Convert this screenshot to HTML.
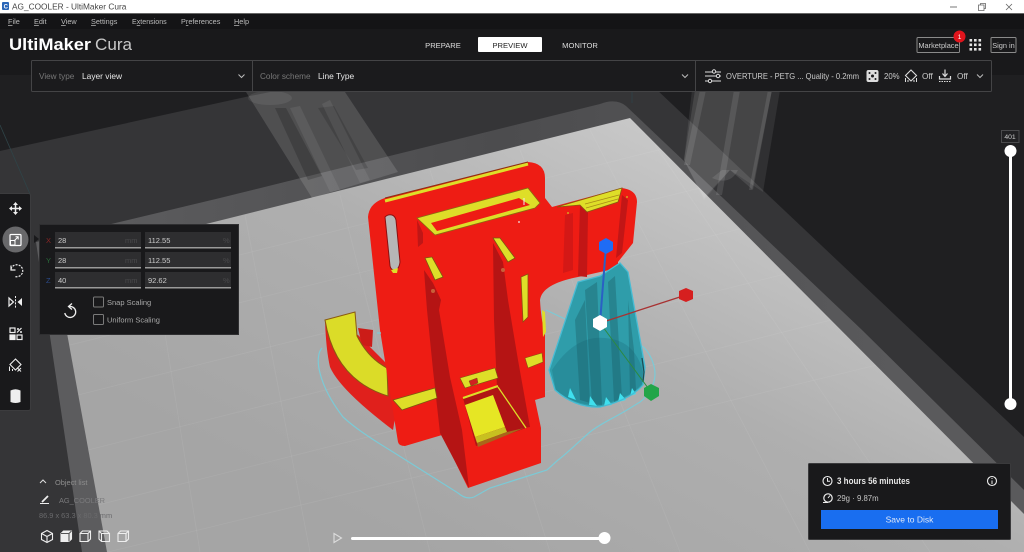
<!DOCTYPE html>
<html lang="en"><head><meta charset="utf-8"><title>AG_COOLER - UltiMaker Cura</title>
<style>
html,body{margin:0;padding:0;background:#1f1f21;width:1024px;height:552px;overflow:hidden}
svg{display:block;position:absolute;left:0;top:0}
text{font-family:"Liberation Sans",sans-serif;font-size:8px;fill:#ddd}
</style></head><body>
<svg width="1024" height="552" viewBox="0 0 1024 552" xmlns="http://www.w3.org/2000/svg">
<defs>
<linearGradient id="plate" gradientUnits="userSpaceOnUse" x1="640" y1="120" x2="420" y2="552">
<stop offset="0" stop-color="#c8c8c8"/><stop offset=".45" stop-color="#afafaf"/><stop offset="1" stop-color="#a5a5a5"/></linearGradient>
<linearGradient id="mid" gradientUnits="userSpaceOnUse" x1="100" y1="300" x2="900" y2="300">
<stop offset="0" stop-color="#5c5c5e"/><stop offset=".5" stop-color="#4c4c4e"/><stop offset="1" stop-color="#5a5a5c"/></linearGradient>
<clipPath id="pc"><path d="M54 262 L630 118 L1024 514 V552 H107Z"/></clipPath>
</defs>
<rect width="1024" height="552" fill="#1f1f21"/>
<!-- outer band -->
<path d="M0 151 L250 96 L290 88 H655 L1024 437 V552 H0Z" fill="#353537"/>
<!-- mid band -->
<path d="M36 242 L220 198 L600 104 Q616 98 626 106 L862 330 L1024 490 V552 H82Z" fill="url(#mid)"/>
<!-- plate -->
<path d="M54 262 L630 118 L1024 514 V552 H107Z" fill="url(#plate)"/>
<g clip-path="url(#pc)" stroke="#fff" stroke-opacity=".07" stroke-width=".8">
<path d="M60 300L690 142M70 345L740 178M78 395L795 215M88 450L860 255M98 505L930 295M108 552L1000 335"/>
<path d="M150 240L200 552M245 215L310 552M340 195L430 552M430 170L550 552M520 150L680 552M590 130L810 552M655 145L930 552"/>
</g>
<path d="M0 125L30 194" stroke="#2f4448" stroke-width=".8" fill="none"/>
<path d="M632 90V103" stroke="#2f4448" stroke-width=".8"/>
<!-- left rods -->
<g>
<path d="M246 92H345L398 172L312 198Z" fill="#fff" fill-opacity=".13"/>
<path d="M275 108H286L322 176L308 180Z" fill="#000" fill-opacity=".18"/>
<path d="M318 108L334 106L368 168L356 170Z" fill="#000" fill-opacity=".14"/>
<path d="M290 108L300 106L340 190L330 192Z" fill="#fff" fill-opacity=".07"/>
<path d="M322 104L330 100L370 180L360 183Z" fill="#fff" fill-opacity=".07"/>
<ellipse cx="270" cy="98" rx="22" ry="7" fill="#fff" fill-opacity=".07"/>
</g>
<!-- right rods -->
<g>
<path d="M692 90H780L763 192L730 170L704 200L684 160Z" fill="#fff" fill-opacity=".08"/>
<path d="M695 90H772L753 190L730 170L704 198L684 160Z" fill="#fff" fill-opacity=".1"/>
<path d="M700 90H706L690 165H684Z M734 90H740L722 195H716Z M768 90H772L752 190H749Z" fill="#fff" fill-opacity=".1"/>
<path d="M712 178Q730 186 738 170L722 170Z" fill="#fff" fill-opacity=".1"/>
</g>

<!-- arc piece -->
<path d="M325 320Q326 350 330 367Q340 390 393 430L398 400L388 365L358 335Z" fill="#e0201c"/>
<path d="M358 328L373 330L372 347L362 345Z" fill="#cc1c18"/>
<path d="M325 320L355 312L357 336Q368 358 387 368L388 396Q335 380 325 320Z" fill="#dbdc28" stroke="#8a5a10" stroke-width="1"/>

<!-- main body -->
<path d="M385 198L528 162Q545 163 545 178V198L552 207L622 188Q637 190 637 202L633 243L618 262V268L578 277Q542 284 540 300Q541 320 545 333V397L535 400L541 428V463L468 488L442 435L405 446Q399 446 398 442L380 330L368 217Q369 203 385 198Z" fill="#ee1c14"/>
<!-- shading -->
<path d="M424 270L433 283L441 300L439 310L450 377L462 430L469 488L440 433L433 370L427 310Z" fill="#b51414"/>
<path d="M493 243L503 262L508 300L518 360L530 427L525 428L497 388L494 320Z" fill="#b51414"/>
<path d="M580 205L588 212L587 277L578 276Z" fill="#c21616"/>
<path d="M622 195L628 200L622 253L616 258Z" fill="#c21616"/>
<path d="M565 215L573 213L573 270L563 273Z" fill="#d41816"/>
<path d="M417 220L423 233V243L418 247Z" fill="#c01616"/>
<!-- edge trim -->
<path d="M385 201L528 164" stroke="#dede28" stroke-width="3"/>
<path d="M385 198L528 162" stroke="#8a3010" stroke-width="1"/>
<!-- slots -->
<path d="M385 217Q388 214 392 215Q395 216 396 220L400 262Q399 270 394 270Q391 270 390 266Z" fill="#b6b6b6" stroke="#8c1010" stroke-width="1"/>
<path d="M391 270L398 268L397 273L393 273Z" fill="#dede28"/>
<!-- yellow frame -->
<path d="M417 218L528 188L540 203L535 208L435 235Z" fill="#dede28" stroke="#8a6a10" stroke-width=".8"/>
<path d="M431 223L519 198L530 205L437 231Z" fill="#ee1c14"/>
<path d="M524 198V205" stroke="#eee" stroke-width="1"/>
<!-- column tops -->
<path d="M425 258L432 257L443 277L435 280Z" fill="#dede28" stroke="#7a5a10" stroke-width=".8"/>
<path d="M493 238L500 238L515 258L508 262Z" fill="#dede28" stroke="#7a5a10" stroke-width=".8"/>
<path d="M521 277L528 274L528 317L523 322Z" fill="#dede28" stroke="#8c5010" stroke-width=".8"/>
<path d="M557 207L622 188L618 202L587 212L580 205Z" fill="#dede28" stroke="#8a5a10" stroke-width=".8"/>
<path d="M585 204L619 195M586 208L618 199" stroke="#a88a18" stroke-width=".7"/>
<path d="M542 310L545 312L546 332L543 337Z" fill="#dede28"/>
<path d="M525 358L542 353L543 362L528 368Z" fill="#dede28" stroke="#8c5010" stroke-width=".6"/>
<circle cx="433" cy="291" r="2" fill="#c8603a"/><circle cx="503" cy="270" r="2" fill="#c8603a"/><circle cx="519" cy="222" r=".9" fill="#eee"/>
<circle cx="568" cy="213" r="1" fill="#d8a020"/><circle cx="627" cy="197" r="1" fill="#d8a020"/>
<!-- left ledge -->
<path d="M393 400L435 388L437 398L402 410Z" fill="#dede28" stroke="#7a5a10" stroke-width=".8"/>
<!-- front recess -->
<path d="M460 378L495 368L498 378L465 388Z" fill="#dede28" stroke="#7a5a10" stroke-width=".6"/>
<path d="M469 381L477 378L478 383L471 386Z" fill="#d02020" stroke="#7a5a10" stroke-width=".5"/>
<path d="M463 398L498 386L526 428L476 446Z" fill="#b01414"/>
<path d="M463 398L498 386" stroke="#dede28" stroke-width="2"/>
<path d="M498 387L526 428" stroke="#dede28" stroke-width="1.300"/>
<path d="M465 405L493 395L505 427L475 437Z" fill="#e6e624"/>
<path d="M475 437L505 427L507 432L477 443Z" fill="#c8c020"/>
<path d="M477 443L507 432L524 428L478 447Z" fill="#a8661a"/>

<!-- skirt -->
<path d="M546 310L565 319M377 333H381M642 346C650 352 655 365 655 374C655 385 648 396 640 402L627 410C610 420 600 424 590 432C575 445 565 455 558 460L547 470L490 488L474 497Q466 500 458 493L393 452C370 438 355 428 343 417C330 400 323 385 320 373C317 362 318 352 322 348" fill="none" stroke="#7ccad6" stroke-width="1.200"/>
<!-- cone -->
<path d="M578 282L600 276L620 263L628 272L645 367L643 385Q630 400 600 407Q575 408 555 390L549 370Z" fill="#2f9daa"/>
<path d="M585 290L597 282L602 405L592 404Z M608 282L615 276L622 398L614 402Z M575 320L585 300L590 403L580 400Z M628 300L634 350L636 390L630 395Z" fill="#27848f"/>
<path d="M552 370Q575 335 605 338Q635 340 643 372L642 384Q630 398 600 405Q575 406 556 390Z" fill="#14586a" fill-opacity=".22"/>
<path d="M570 388L576 400L568 397Z M590 396L597 406L589 405Z M606 397L612 405L604 406Z M620 393L626 400L618 402Z M632 388L636 394L630 396Z" fill="#3fe0ee"/>
<path d="M578 282L600 276L620 263L628 272L645 367L643 385Q630 400 600 407Q575 408 555 390L549 370Z" fill="none" stroke="#48bcd4" stroke-width="1.300"/>
<path d="M642 358L644 372L643 382" stroke="#1d4a52" stroke-width="1.200" fill="none"/>
<!-- gizmo -->
<path d="M600 323L686 295" stroke="#a83232" stroke-width="1.300"/>
<path d="M600 323L606 246" stroke="#2a60c4" stroke-width="2"/>
<path d="M600 323L651 392" stroke="#2c8a40" stroke-width="1"/>
<path d="M686 288L693 291L693 299L686 302L679 299L679 291Z" fill="#d61f1f"/>
<path d="M606 238L613 242L613 250L606 254L599 250L599 242Z" fill="#1f6cf5"/>
<path d="M651 384L659 388L659 396L651 401L644 396L644 388Z" fill="#22a548"/>
<path d="M600 315L607 319L607 327L600 331L593 327L593 319Z" fill="#fff"/>

<!-- title bar -->
<rect width="1024" height="13" fill="#fff"/><rect y="13" width="1024" height="1" fill="#666"/>
<rect x="2" y="2" width="7" height="8" rx="1" fill="#2a66b8"/><text x="3.600" y="8.600" style="font-size:6px;font-weight:bold;fill:#fff">C</text>
<text x="12" y="9.500" style="font-size:8.300px;fill:#444">AG_COOLER - UltiMaker Cura</text>
<path d="M950 7H957" stroke="#777" stroke-width="1"/>
<path d="M978.500 5H984V10.500H978.500Z M980.500 5V3.500H985.500V8.500H984" stroke="#666" fill="none" stroke-width=".8"/>
<path d="M1006 4L1012 10M1012 4L1006 10" stroke="#666" stroke-width=".8"/>
<!-- menu + header -->
<rect y="14" width="1024" height="15" fill="#141416"/>
<rect y="29" width="1024" height="46" fill="#19191b"/>
<text x="8" y="24" style="font-size:7.300px;fill:#bbb"><tspan text-decoration="underline">F</tspan>ile</text>
<text x="34" y="24" style="font-size:7.300px;fill:#bbb"><tspan text-decoration="underline">E</tspan>dit</text>
<text x="61" y="24" style="font-size:7.300px;fill:#bbb"><tspan text-decoration="underline">V</tspan>iew</text>
<text x="91" y="24" style="font-size:7.300px;fill:#bbb"><tspan text-decoration="underline">S</tspan>ettings</text>
<text x="132" y="24" style="font-size:7.100px;fill:#bbb">E<tspan text-decoration="underline">x</tspan>tensions</text>
<text x="181" y="24" style="font-size:7.300px;fill:#bbb">P<tspan text-decoration="underline">r</tspan>eferences</text>
<text x="234" y="24" style="font-size:7.300px;fill:#bbb"><tspan text-decoration="underline">H</tspan>elp</text>
<text x="9" y="50" style="font-size:16.500px;font-weight:bold;fill:#fff" textLength="82" lengthAdjust="spacingAndGlyphs">UltiMaker</text>
<text x="95" y="50" style="font-size:16.500px;fill:#c8c8c8" textLength="37" lengthAdjust="spacingAndGlyphs">Cura</text>
<text x="443" y="48" text-anchor="middle" style="font-size:7.600px;fill:#ddd">PREPARE</text>
<rect x="478" y="37" width="64" height="15" rx="1" fill="#fff"/>
<text x="510" y="48" text-anchor="middle" style="font-size:7.600px;fill:#222">PREVIEW</text>
<text x="580" y="48" text-anchor="middle" style="font-size:7.600px;fill:#ddd">MONITOR</text>
<rect x="917" y="37.500" width="42.500" height="15" rx="1" fill="none" stroke="#8a8a8a"/>
<text x="938.500" y="48" text-anchor="middle" style="font-size:7.400px;fill:#ccc">Marketplace</text>
<circle cx="959.500" cy="36.500" r="6" fill="#e0141c"/><text x="959.500" y="39" text-anchor="middle" style="font-size:6.500px;fill:#fff">1</text>
<g fill="#e6e6e6"><rect x="969.500" y="39" width="2.600" height="2.600"/><rect x="974" y="39" width="2.600" height="2.600"/><rect x="978.500" y="39" width="2.600" height="2.600"/><rect x="969.500" y="43.500" width="2.600" height="2.600"/><rect x="974" y="43.500" width="2.600" height="2.600"/><rect x="978.500" y="43.500" width="2.600" height="2.600"/><rect x="969.500" y="48" width="2.600" height="2.600"/><rect x="974" y="48" width="2.600" height="2.600"/><rect x="978.500" y="48" width="2.600" height="2.600"/></g>
<rect x="991" y="37.500" width="25" height="15" rx="1" fill="none" stroke="#8a8a8a"/>
<text x="1003.500" y="48" text-anchor="middle" style="font-size:7.400px;fill:#ccc">Sign in</text>
<!-- view bar -->
<rect x="31.500" y="60.500" width="960" height="31" rx="1" fill="#1b1b1d" stroke="#444446"/>
<path d="M252.500 61V91M695.500 61V91" stroke="#444446"/>
<text x="39" y="79" style="font-size:8.200px;fill:#777">View type</text>
<text x="82" y="79" style="font-size:8.400px;fill:#e8e8e8">Layer view</text>
<path d="M238.500 74.500L241.500 77.500L244.500 74.500" fill="none" stroke="#bbb" stroke-width="1"/>
<text x="260" y="79" style="font-size:8.200px;fill:#777">Color scheme</text>
<text x="318" y="79" style="font-size:8.400px;fill:#e8e8e8">Line Type</text>
<path d="M682 74.500L685 77.500L688 74.500" fill="none" stroke="#bbb" stroke-width="1"/>
<path d="M705 72H721M705 76H721M705 81H721" stroke="#ddd" stroke-width="1"/>
<g fill="#19191b" stroke="#ddd"><circle cx="714" cy="71.500" r="1.700"/><circle cx="718" cy="76" r="1.700"/><circle cx="710" cy="81" r="1.700"/></g>
<text x="726" y="79" style="font-size:8.400px;fill:#ccc" textLength="133" lengthAdjust="spacingAndGlyphs">OVERTURE - PETG ... Quality - 0.2mm</text>
<rect x="866.500" y="70" width="12" height="12" rx="2" fill="#ddd"/>
<g fill="#1b1b1d"><circle cx="872.500" cy="76" r="1.500"/><circle cx="869.500" cy="73" r="1"/><circle cx="875.500" cy="73" r="1"/><circle cx="869.500" cy="79" r="1"/><circle cx="875.500" cy="79" r="1"/></g>
<text x="884" y="79" style="font-size:7.800px;fill:#ccc">20%</text>
<path d="M911 70L916.500 75.500L911 81L905.500 75.500Z" fill="none" stroke="#ddd" stroke-width="1.100"/>
<path d="M905.500 82V78M916.500 82V78M908 82V80M914 82V80" stroke="#ddd" stroke-width="1"/>
<text x="922" y="79" style="font-size:8.200px;fill:#ccc">Off</text>
<path d="M945 69.500V76M942.500 73.500L945 76.500L947.500 73.500M939.500 76V79H950.500V76" fill="none" stroke="#ddd" stroke-width="1.200"/>
<path d="M939 81.500H951" stroke="#ddd" stroke-dasharray="1.500 1"/>
<text x="957" y="79" style="font-size:8.200px;fill:#ccc">Off</text>
<path d="M977 74.500L980 77.500L983 74.500" fill="none" stroke="#bbb" stroke-width="1"/>

<!-- layer slider -->
<rect x="1001.500" y="130.500" width="17.500" height="12" fill="#212123" stroke="#4a4a4c"/>
<text x="1010" y="139" text-anchor="middle" style="font-size:6.800px;fill:#ccc">401</text>
<rect x="1009" y="151" width="3" height="253" fill="#fff"/>
<circle cx="1010.500" cy="151" r="6" fill="#fff"/><circle cx="1010.500" cy="404" r="6" fill="#fff"/>

<!-- left toolbar -->
<rect x="-2" y="193.500" width="32.500" height="217" rx="2" fill="#19191b" stroke="#3c3c3e"/>
<circle cx="15.500" cy="239.500" r="13" fill="#68686a"/>
<!-- move -->
<path d="M15.500 203V214M10 208.500H21" stroke="#eee" stroke-width="1.500"/>
<path d="M15.500 202L13 205H18ZM15.500 215L13 212H18ZM9 208.500L12 206V211ZM22 208.500L19 206V211Z" fill="#eee"/>
<!-- scale -->
<rect x="10" y="234.500" width="11" height="11" rx="1" fill="none" stroke="#fff" stroke-width="1.200"/>
<rect x="10.500" y="240.500" width="4.500" height="4.500" fill="#68686a" stroke="#fff"/>
<path d="M14 241L18 237M15.500 236.800H18.200V239.500" fill="none" stroke="#fff" stroke-width="1"/>
<!-- rotate -->
<path d="M11 265.500V270H15.500" fill="none" stroke="#eee" stroke-width="1.200"/>
<path d="M11 269A6 6 0 1 1 15 276.500" fill="none" stroke="#eee" stroke-width="1.200" stroke-dasharray="2 1.200"/>
<!-- mirror -->
<path d="M15.500 296V308" stroke="#eee" stroke-dasharray="2 1.200"/>
<path d="M9 298V306L13.500 302Z" fill="none" stroke="#eee" stroke-width="1.200"/>
<path d="M22 298V306L17.500 302Z" fill="#eee"/>
<!-- per-model -->
<g fill="none" stroke="#eee" stroke-width="1.200"><rect x="10" y="328" width="5" height="4.500"/><rect x="10" y="335" width="5" height="4.500" fill="#eee"/><rect x="17" y="335" width="5" height="4.500"/></g>
<path d="M17 332.500L21.500 328" stroke="#eee" stroke-width="1.200"/>
<circle cx="18" cy="329" r="1" fill="#eee"/><circle cx="21" cy="332" r="1" fill="#eee"/>
<!-- support -->
<path d="M15.500 359L21 364.500L15.500 370L10 364.500Z" fill="none" stroke="#eee" stroke-width="1.100"/>
<path d="M9.500 371V366.500M12.500 371V369" stroke="#eee"/>
<path d="M17.500 368L21 371.500M21 368L17.500 371.500" stroke="#eee"/>
<!-- cylinder -->
<path d="M10.500 390.500Q15.500 388 20.500 390.500V402Q15.500 404 10.500 402Z" fill="#eee"/>

<!-- scale panel -->
<path d="M39 239L34 235V243Z" fill="#19191b"/>
<rect x="39.500" y="224.500" width="199" height="110" fill="#19191b" stroke="#2f2f31"/>
<g fill="#2e2e30"><rect x="55" y="232" width="86" height="15"/><rect x="145" y="232" width="86" height="15"/><rect x="55" y="252" width="86" height="15"/><rect x="145" y="252" width="86" height="15"/><rect x="55" y="272" width="86" height="15"/><rect x="145" y="272" width="86" height="15"/></g>
<g fill="#9a9a9a"><rect x="55" y="247" width="86" height="1.500"/><rect x="145" y="247" width="86" height="1.500"/><rect x="55" y="267" width="86" height="1.500"/><rect x="145" y="267" width="86" height="1.500"/><rect x="55" y="287" width="86" height="1.500"/><rect x="145" y="287" width="86" height="1.500"/></g>
<text x="46" y="243" style="font-size:7.500px;fill:#8a2626">X</text>
<text x="46" y="263" style="font-size:7.500px;fill:#2a6a3a">Y</text>
<text x="46" y="283" style="font-size:7.500px;fill:#2a4a8a">Z</text>
<text x="58" y="243" style="font-size:7.500px;fill:#ccc">28</text>
<text x="58" y="263" style="font-size:7.500px;fill:#ccc">28</text>
<text x="58" y="283" style="font-size:7.500px;fill:#ccc">40</text>
<text x="148" y="243" style="font-size:7.500px;fill:#ccc">112.55</text>
<text x="148" y="263" style="font-size:7.500px;fill:#ccc">112.55</text>
<text x="148" y="283" style="font-size:7.500px;fill:#ccc">92.62</text>
<text x="125" y="243" style="font-size:7.500px;fill:#4a4a4c">mm</text><text x="125" y="263" style="font-size:7.500px;fill:#4a4a4c">mm</text><text x="125" y="283" style="font-size:7.500px;fill:#4a4a4c">mm</text><text x="223" y="243" style="font-size:7.500px;fill:#4a4a4c">%</text><text x="223" y="263" style="font-size:7.500px;fill:#4a4a4c">%</text><text x="223" y="283" style="font-size:7.500px;fill:#4a4a4c">%</text>
<rect x="93.500" y="297" width="10" height="10" rx="1" fill="none" stroke="#7a7a7a"/>
<rect x="93.500" y="314.500" width="10" height="10" rx="1" fill="none" stroke="#7a7a7a"/>
<text x="107" y="305" style="font-size:7.500px;fill:#a8a8a8">Snap Scaling</text>
<text x="107" y="322.500" style="font-size:7.500px;fill:#a8a8a8">Uniform Scaling</text>
<path d="M69.500 306.500A5.500 5.500 0 1 1 64.800 313" fill="none" stroke="#eee" stroke-width="1.300"/>
<path d="M72 303.500L68.500 306.500L72 309.500" fill="none" stroke="#eee" stroke-width="1.300"/>

<!-- object list -->
<path d="M40 483L43 480L46 483" fill="none" stroke="#ddd" stroke-width="1"/>
<text x="55" y="485" style="font-size:7.400px;fill:#8e8e8e">Object list</text>
<path d="M42 502L48 496" stroke="#eee" stroke-width="1.800"/><path d="M40 503.500H49" stroke="#eee"/>
<text x="59" y="503" style="font-size:7.400px;fill:#7a7a7c">AG_COOLER</text>
<text x="39" y="518" style="font-size:7.400px;fill:#6a6a6c">86.9 x 63.3 x 80.3 mm</text>
<g fill="none" stroke="#eee" stroke-width="1.100">
<path d="M47 530.500L52.500 533.500V539.500L47 542.500L41.500 539.500V533.500ZM41.500 533.500L47 536.500L52.500 533.500M47 536.500V542.500"/>
<path d="M61 533.500L63.500 531H71.500V539L69 541.500H61Z" fill="#eee"/>
<path d="M61 533.500H69V541.500M69 533.500L71.500 531" stroke="#555"/>
<path d="M80 533.500L82.500 531H90.500V539L88 541.500H80ZM80 533.500H88V541.500M88 533.500L90.500 531"/>
<path d="M99 531H107L109.500 533.500V541.500H101.500L99 539ZM101.500 533.500H109.500M101.500 533.500V541.500M99 531L101.500 533.500"/>
<path d="M118 533.500L120.500 531H128.500V539L126 541.500H118ZM118 533.500H126V541.500M126 533.500L128.500 531"/>
</g>

<!-- play -->
<path d="M334 533.500L341.500 538L334 542.500Z" fill="none" stroke="#ddd" stroke-width="1.100"/>
<rect x="351" y="537" width="253" height="3" rx="1.500" fill="#fff"/>
<circle cx="604.500" cy="538" r="6" fill="#fff"/>

<!-- time panel -->
<rect x="808.500" y="463.500" width="202" height="76" rx="1" fill="#19191b" stroke="#3a3a3c"/>
<circle cx="827.500" cy="481" r="4.500" fill="none" stroke="#eee" stroke-width="1.100"/>
<path d="M827.500 478V481.300H830" fill="none" stroke="#eee"/>
<text x="837" y="484" style="font-size:8.800px;font-weight:bold;fill:#e6e6e6" textLength="73" lengthAdjust="spacingAndGlyphs">3 hours 56 minutes</text>
<circle cx="992" cy="481" r="4.500" fill="none" stroke="#eee" stroke-width="1.100"/>
<path d="M992 480.500V484M992 478V479" stroke="#eee"/>
<circle cx="828" cy="498" r="4.200" fill="none" stroke="#eee" stroke-width="1.200"/>
<path d="M823 502.500H828M828 498L830 495.500" fill="none" stroke="#eee"/>
<text x="837" y="501" style="font-size:7.800px;fill:#c4c4c4">29g · 9.87m</text>
<rect x="821" y="510" width="177" height="19" fill="#196ef0"/>
<text x="909.500" y="522.500" text-anchor="middle" style="font-size:8.500px;fill:#dfe8f8">Save to Disk</text>
</svg>
</body></html>
